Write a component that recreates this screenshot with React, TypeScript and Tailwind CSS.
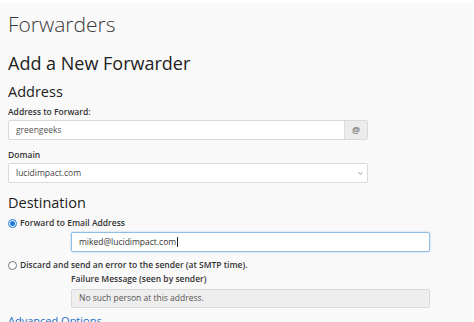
import { ChevronDown } from 'lucide-react'

const FONT = { fontFamily: '"Open Sans", "Liberation Sans", sans-serif' }

function Radio({ checked }: { checked?: boolean }) {
  return checked ? (
    <span className="mr-[3px] grid size-[9px] shrink-0 place-items-center rounded-full border border-[#1d7ad8] bg-white">
      <span className="size-[5px] rounded-full bg-[#1d7ad8]" />
    </span>
  ) : (
    <span className="mr-[3px] size-[9px] shrink-0 rounded-full border border-[#777] bg-white" />
  )
}

export default function App() {
  return (
    <div className="h-[322px] w-[474px] overflow-hidden bg-white text-[#333]" style={FONT}>
      <div className="mt-[3px] mr-[2px] h-[330px] bg-[#f9f9f9] pl-[8px]">
        <h1 className="pt-[9px] text-[21px] leading-[24px] font-light text-[#3a3a3a]">Forwarders</h1>
        <h2 className="mt-[16px] text-[18px] leading-[22px] font-normal text-[#222]">Add a New Forwarder</h2>
        <h3 className="mt-[9px] text-[14.5px] leading-[18px] text-[#222]">Address</h3>

        <label className="mt-[5px] block text-[8.5px] leading-[12px] font-semibold">Address to Forward:</label>
        <div className="mt-[2px] flex h-[20px] w-[360px] rounded-[2px] border border-[#d9d9d9] bg-white">
          <div className="flex flex-1 items-center pl-[7px] text-[8.5px] text-[#555]">greengeeks</div>
          <div className="flex w-[23px] items-center justify-center border-l border-[#dcdcdc] bg-[#ececec] text-[9px] font-bold text-[#888]">
            @
          </div>
        </div>

        <label className="mt-[9px] block text-[8.5px] leading-[12px] font-semibold">Domain</label>
        <div className="mt-[2px] flex h-[20px] w-[360px] items-center justify-between rounded-[2px] border border-[#d9d9d9] bg-white pr-[3px] pl-[7px] text-[8.5px] text-[#444]">
          lucidimpact.com
          <ChevronDown className="size-[7px] text-[#666]" strokeWidth={2.5} />
        </div>

        <h3 className="mt-[11px] text-[14.5px] leading-[18px] text-[#222]">Destination</h3>

        <div className="mt-[5px] flex h-[12px] items-center text-[8.5px] font-semibold">
          <Radio checked />
          Forward to Email Address
        </div>
        <div className="mt-[3px] ml-[63px] flex h-[20px] w-[359px] items-center rounded-[2px] border border-[#8fbde6] bg-white pl-[7px] text-[8.5px] text-[#333] shadow-[0_0_2px_rgba(102,175,233,0.6)]">
          miked@lucidimpact.com
          <span className="ml-[1px] h-[10px] w-px bg-[#222]" />
        </div>

        <div className="mt-[7px] flex h-[12px] items-center text-[8.5px] font-semibold">
          <Radio />
          Discard and send an error to the sender (at SMTP time).
        </div>
        <label className="mt-[2px] ml-[63px] block text-[8.5px] leading-[12px] font-semibold">
          Failure Message (seen by sender)
        </label>
        <div className="mt-[4px] ml-[63px] flex h-[19px] w-[359px] items-center rounded-[2px] border border-[#dadada] bg-[#eeeeee] pl-[7px] text-[8.5px] text-[#555]">
          No such person at this address.
        </div>

        <a className="mt-[5px] block text-[11px] leading-[16px] text-[#1b6ec2]">Advanced Options</a>
      </div>
    </div>
  )
}
